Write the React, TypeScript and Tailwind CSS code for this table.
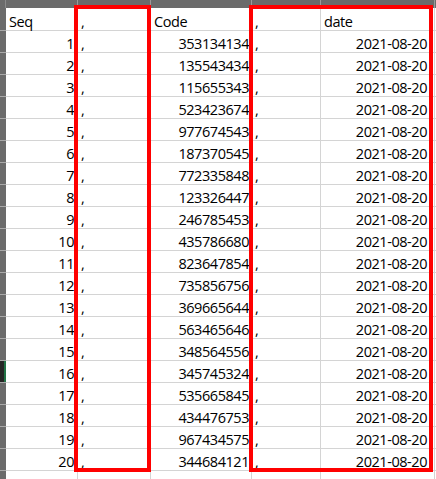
import React from "react";

const codes = [
  "353134134", "135543434", "115655343", "523423674", "977674543",
  "187370545", "772335848", "123326447", "246785453", "435786680",
  "823647854", "735856756", "369665644", "563465646", "348564556",
  "345745324", "535665845", "434476753", "967434575", "344684121",
];

const widths = ["w-[72px]", "w-[73px]", "w-[101px]", "w-[69px]", "w-[114px]", "flex-1"];

function Cell({ w, children, right, h, pr }: { w: string; children?: React.ReactNode; right?: boolean; h: string; pr?: string }) {
  return (
    <div
      className={`${w} ${h} shrink-0 border-r border-b border-[#d4d4d4] flex items-end pl-[3px] ${pr ?? "pr-[3px]"} leading-4 ${right ? "justify-end" : "justify-start"}`}
    >
      {children}
    </div>
  );
}

function Gutter({ h, selected }: { h: string; selected?: boolean }) {
  return (
    <div className={`w-[6px] ${h} shrink-0 flex border-b border-[#a9a9a9] ${selected ? "bg-[#262626]" : "bg-[#6b6b6b]"}`}>
      <div className="flex-1" />
      {selected && <div className="w-[2px] bg-[#217346]" />}
    </div>
  );
}

export default function App() {
  return (
    <div
      className="relative w-[436px] h-[479px] overflow-hidden bg-white text-black text-[14.5px] tracking-[-0.45px]"
      style={{ fontFamily: '"Open Sans", sans-serif' }}
    >
      {/* top bar */}
      <div className="flex h-[8px] bg-[#6b6b6b]">
        <div className="w-[6px] shrink-0 border-r border-[#8a8a8a]" />
        {widths.map((w, i) => (
          <div key={i} className={`${w} shrink-0 border-r border-[#9a9a9a] ${i === 5 ? "border-r-0" : ""}`} />
        ))}
      </div>
      {/* header */}
      <div className="flex">
        <Gutter h="h-[23px]" />
        <Cell w={widths[0]} h="h-[23px]">Seq</Cell>
        <Cell w={widths[1]} h="h-[23px]">,</Cell>
        <Cell w={widths[2]} h="h-[23px]">Code</Cell>
        <Cell w={widths[3]} h="h-[23px]">,</Cell>
        <Cell w={widths[4]} h="h-[23px]">date</Cell>
        <Cell w={widths[5]} h="h-[23px]" />
      </div>
      {codes.map((c, i) => (
        <div key={i} className="flex">
          <Gutter h="h-[22px]" selected={i === 15} />
          <Cell w={widths[0]} h="h-[22px]" right>{i + 1}</Cell>
          <Cell w={widths[1]} h="h-[22px]">,</Cell>
          <Cell w={widths[2]} h="h-[22px]" right pr="pr-[2px]">{c}</Cell>
          <Cell w={widths[3]} h="h-[22px]">,</Cell>
          <Cell w={widths[4]} h="h-[22px]" right pr="pr-[7px]">2021-08-20</Cell>
          <Cell w={widths[5]} h="h-[22px]" />
        </div>
      ))}
      <div className="flex">
        <Gutter h="h-[22px]" />
        {widths.map((w, i) => (
          <Cell key={i} w={w} h="h-[22px]" />
        ))}
      </div>
      {/* red annotation boxes */}
      <div className="absolute left-[74px] top-[5px] w-[77px] h-[467px] border-4 border-[#ff0000]" />
      <div className="absolute left-[249px] top-[5px] w-[184px] h-[467px] border-4 border-[#ff0000]" />
    </div>
  );
}
